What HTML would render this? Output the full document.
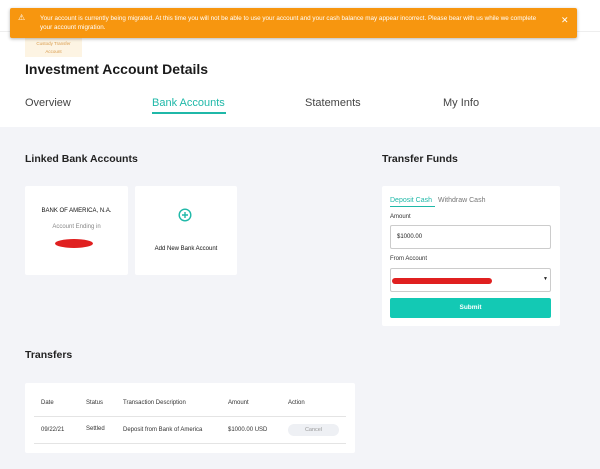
<!DOCTYPE html>
<html><head><style>
*{margin:0;padding:0;box-sizing:border-box}
body{width:600px;height:469px;overflow:hidden;background:#f3f4f8;font-family:"Liberation Sans",sans-serif;position:relative;color:#222}
.a{position:absolute}
.top{left:0;top:0;width:600px;height:127px;background:#fff}
.ban{left:10px;top:8px;width:567px;height:30px;background:#f7960f;box-shadow:0 1px 3px rgba(0,0,0,.3);border-radius:2px;color:#fff;font-size:6.3px;line-height:9px;padding:6px 30px 0 30px}
.card{background:#fff;border-radius:2px}
.t{font-size:7px;color:#333}
.tab{font-size:11px;color:#444;top:97px}
</style></head><body>
<div class="a top"></div>
<div class="a" style="left:0;top:31px;width:600px;height:1px;background:#eee"></div>
<div class="a" style="left:25px;top:38px;width:57px;height:19px;background:#fdf4e3;color:#d89a4a;font-size:4.5px;text-align:center;line-height:8px;padding-top:2px">Custody Transfer<br>Account</div>
<div class="a ban"><span class="a" style="left:8px;top:5px;font-size:8px">⚠</span>Your account is currently being migrated. At this time you will not be able to use your account and your cash balance may appear incorrect. Please bear with us while we complete your account migration.<span class="a" style="left:551px;top:8px;font-size:9px">✕</span></div>
<div class="a" style="left:25px;top:61px;font-size:14px;font-weight:bold;color:#1a1a1a">Investment Account Details</div>
<div class="a tab" style="left:25px">Overview</div>
<div class="a tab" style="left:152px;color:#1fb8a8">Bank Accounts</div>
<div class="a" style="left:152px;top:112px;width:74px;height:1.5px;background:#1fb8a8"></div>
<div class="a tab" style="left:305px">Statements</div>
<div class="a tab" style="left:443px">My Info</div>

<div class="a" style="left:25px;top:153px;font-size:10.5px;font-weight:bold;color:#222">Linked Bank Accounts</div>
<div class="a" style="left:382px;top:153px;font-size:10.5px;font-weight:bold;color:#222">Transfer Funds</div>
<div class="a card" style="left:25px;top:186px;width:103px;height:89px"></div>
<div class="a t" style="left:25px;top:208px;width:103px;text-align:center;font-size:6px;color:#111">BANK OF AMERICA, N.A.</div>
<div class="a t" style="left:25px;top:224px;width:103px;text-align:center;font-size:6px;color:#888">Account Ending in</div>
<div class="a" style="left:55px;top:239px;width:38px;height:9px;background:#e02020;border-radius:50%"></div>
<div class="a card" style="left:135px;top:186px;width:102px;height:89px"></div>
<svg class="a" style="left:178px;top:208px" width="14" height="14" viewBox="0 0 14 14"><circle cx="7" cy="7" r="5.8" fill="none" stroke="#1fb8a8" stroke-width="1.4"/><path d="M7 4v6M4 7h6" stroke="#1fb8a8" stroke-width="1.4"/></svg>
<div class="a t" style="left:135px;top:246px;width:102px;text-align:center;font-size:6px;color:#111">Add New Bank Account</div>

<div class="a card" style="left:382px;top:186px;width:178px;height:140px"></div>
<div class="a" style="left:390px;top:197px;font-size:7px;color:#1fb8a8">Deposit Cash</div>
<div class="a" style="left:390px;top:206px;width:45px;height:1px;background:#1fb8a8"></div>
<div class="a" style="left:438px;top:197px;font-size:7px;color:#777">Withdraw Cash</div>
<div class="a t" style="left:390px;top:214px;font-size:6px">Amount</div>
<div class="a" style="left:390px;top:225px;width:161px;height:24px;border:1px solid #ccc;border-radius:2px;font-size:6px;padding:8px 0 0 6px">$1000.00</div>
<div class="a t" style="left:390px;top:256px;font-size:6px">From Account</div>
<div class="a" style="left:390px;top:268px;width:161px;height:24px;border:1px solid #ccc;border-radius:2px"><span class="a" style="left:152px;top:7px;font-size:5px">▼</span></div>
<div class="a" style="left:392px;top:278px;width:100px;height:6px;background:#e02020;border-radius:3px"></div>
<div class="a" style="left:390px;top:298px;width:161px;height:20px;background:#13c9b4;border-radius:2px;color:#fff;font-size:6.5px;font-weight:bold;text-align:center;line-height:20px">Submit</div>

<div class="a" style="left:25px;top:349px;font-size:10.5px;font-weight:bold;color:#222">Transfers</div>
<div class="a card" style="left:25px;top:383px;width:330px;height:70px"></div>
<div class="a t" style="left:41px;top:400px;font-size:6px">Date</div>
<div class="a t" style="left:86px;top:400px;font-size:6px">Status</div>
<div class="a t" style="left:123px;top:400px;font-size:6px">Transaction Description</div>
<div class="a t" style="left:228px;top:400px;font-size:6px">Amount</div>
<div class="a t" style="left:288px;top:400px;font-size:6px">Action</div>
<div class="a" style="left:34px;top:416px;width:312px;height:1px;background:#e4e4e4"></div>
<div class="a t" style="left:41px;top:427px;font-size:6px">09/22/21</div>
<div class="a t" style="left:86px;top:426px;font-size:6px">Settled</div>
<div class="a t" style="left:123px;top:427px;font-size:6px">Deposit from Bank of America</div>
<div class="a t" style="left:228px;top:427px;font-size:6px">$1000.00 USD</div>
<div class="a" style="left:288px;top:424px;width:51px;height:12px;background:#eef0f4;border-radius:6px;font-size:5.5px;color:#999;text-align:center;line-height:12px">Cancel</div>
<div class="a" style="left:34px;top:443px;width:312px;height:1px;background:#e4e4e4"></div>
</body></html>
